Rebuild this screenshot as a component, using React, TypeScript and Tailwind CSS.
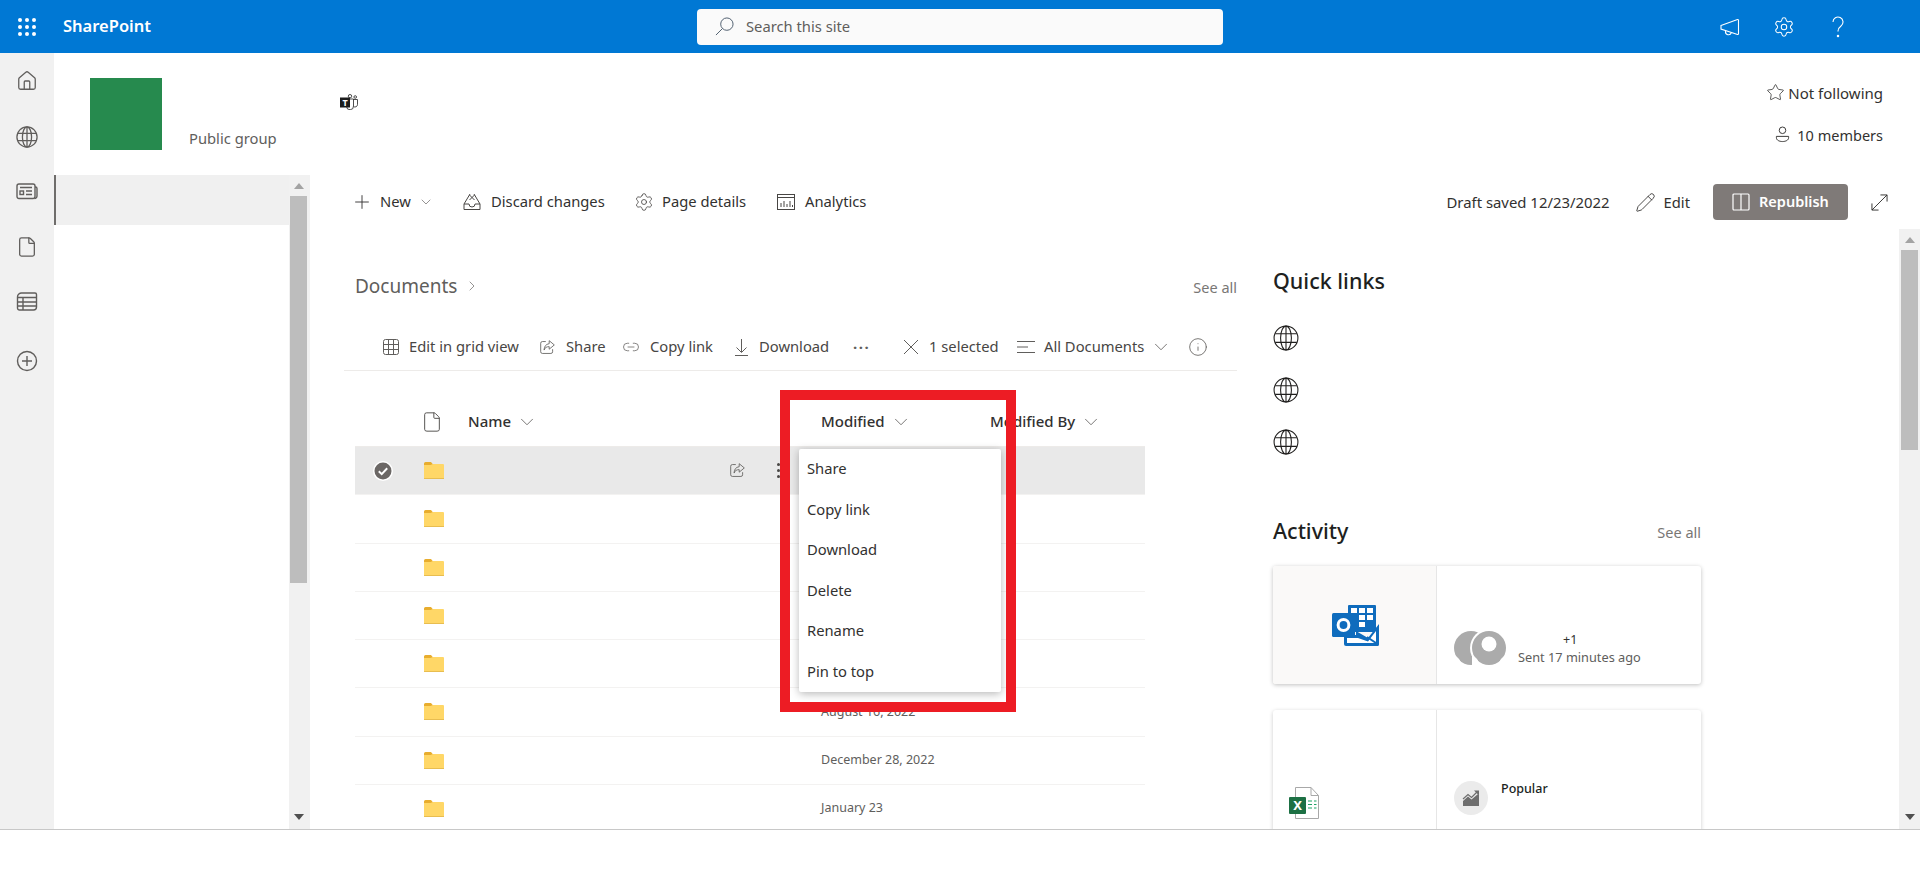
import {
  ChevronDown,
  ChevronRight,
  File,
  House,
  Info,
  Link2,
  Pencil,
  Plus,
  Settings,
  Star,
} from 'lucide-react';
import type { ReactNode } from 'react';

const GlobeIcon = ({ className, strokeWidth, color }: { className: string; strokeWidth: number; color: string }) => (
  <svg viewBox="0 0 24 24" fill="none" stroke={color} strokeWidth={strokeWidth} className={className}>
    <circle cx="12" cy="12" r="11" />
    <ellipse cx="12" cy="12" rx="5" ry="11" />
    <path d="M12 1v22M2 8h20M2 16h20" />
  </svg>
);

const ShareIcon = ({ className = '' }: { className?: string }) => (
  <svg viewBox="0 0 20 20" fill="none" stroke="currentColor" strokeWidth="1" className={className}>
    <path d="M8 3H4a2 2 0 0 0-2 2v10a2 2 0 0 0 2 2h10a2 2 0 0 0 2-2v-3" />
    <path d="M12 2l6 5-6 5V9c-3 0-5 1-6 4 0-4 2-7 6-7.500z" />
  </svg>
);

const FolderIcon = () => (
  <svg viewBox="0 0 20 17" className="h-[17px] w-[20px]">
    <path d="M0 1.500A1.500 1.500 0 0 1 1.500 0H7l2.500 3H0z" fill="#e8ad2e" />
    <path d="M0 3h6.500L9 2h10a1 1 0 0 1 1 1v13a1 1 0 0 1-1 1H1a1 1 0 0 1-1-1z" fill="#ffd767" />
    <path d="M0 16h20v.500a.500.500 0 0 1-.500.500H.500a.500.500 0 0 1-.500-.500z" fill="#e8bd50" />
  </svg>
);

const CheckCircle = () => (
  <svg viewBox="0 0 20 20" className="h-[20px] w-[20px]">
    <circle cx="10" cy="10" r="10" fill="#fff" />
    <circle cx="10" cy="10" r="8.500" fill="#6b6765" />
    <path d="M5.800 10.300l2.900 2.800 5.500-5.800" fill="none" stroke="#fff" strokeWidth="2" />
  </svg>
);

const NewsIcon = () => (
  <svg viewBox="0 0 22 22" fill="none" stroke="#605e5c" strokeWidth="1.400" className="h-[22px] w-[22px]">
    <rect x="1" y="4" width="18" height="14.500" rx="2" />
    <path d="M19 7h.500A1.500 1.500 0 0 1 21 8.500V16a2.500 2.500 0 0 1-2.500 2.500" />
    <path d="M4 7.500h12M10 11h6M10 14.500h6" />
    <rect x="4" y="11" width="3.500" height="3.500" />
  </svg>
);

const ListsIcon = () => (
  <svg viewBox="0 0 22 22" fill="none" stroke="#605e5c" strokeWidth="1.400" className="h-[22px] w-[22px]">
    <path d="M6 2h13a1.500 1.500 0 0 1 1.500 1.500V16a3 3 0 0 1-3 3H3.500A2 2 0 0 1 1.500 17V6A4 4 0 0 1 6 2z" />
    <path d="M1.500 6.500h19M1.500 11h19M1.500 15h19M7 6.500V19" />
  </svg>
);

const AddCircle = () => (
  <svg viewBox="0 0 22 22" fill="none" stroke="#605e5c" strokeWidth="1.400" className="h-[22px] w-[22px]">
    <circle cx="11" cy="11" r="9.500" />
    <path d="M11 6v10M6 11h10" />
  </svg>
);

const TeamsIcon = () => (
  <svg viewBox="0 0 18 16" className="h-[16px] w-[18px]">
    <circle cx="10" cy="2.200" r="1.700" fill="#fff" stroke="#222" strokeWidth=".8" />
    <circle cx="15.200" cy="3" r="1.300" fill="#fff" stroke="#222" strokeWidth=".8" />
    <path d="M12.500 5.500h5v5a2.500 2.500 0 0 1-4 2" fill="#fff" stroke="#222" strokeWidth=".8" />
    <path d="M6 5h7.500v7a3.500 3.500 0 0 1-7 .5" fill="#fff" stroke="#222" strokeWidth=".8" />
    <rect x="0" y="3.500" width="10" height="10" fill="#1c1c1c" />
    <text x="5" y="11.500" textAnchor="middle" fontSize="9" fontWeight="700" fill="#fff">
      T
    </text>
  </svg>
);

const OutlookIcon = () => (
  <svg viewBox="0 0 47 41" className="h-[41px] w-[47px]">
    <rect x="16" y="0" width="28" height="27" rx="1" fill="#0f6cbd" />
    <path d="M19 3h6v5h-6zM27 3h6v5h-6zM35 3h6v5h-6zM27 10h6v5h-6zM35 10h6v5h-6zM27 17h6v5h-6z" fill="#fff" />
    <path d="M12 30h12v-4l12 7 11-14v20.500a1.500 1.500 0 0 1-1.500 1.500H14a2 2 0 0 1-2-2z" fill="#0f6cbd" />
    <path d="M15 33h11l10 3.500 8-10.500V38H15z" fill="#fff" />
    <path d="M44 38l-9-6" stroke="#0f6cbd" strokeWidth="2" />
    <rect x="0" y="8" width="23" height="24" rx="1.500" fill="#0f6cbd" />
    <circle cx="11.500" cy="20" r="5.400" fill="none" stroke="#fff" strokeWidth="3" />
  </svg>
);

const AvatarPair = () => (
  <svg viewBox="0 0 52 34" className="h-[34px] w-[52px]">
    <circle cx="17" cy="17" r="17" fill="#ababab" />
    <path d="M0 24Q5 26 8 34H0z" fill="#fff" />
    <circle cx="35" cy="17" r="19" fill="#fff" />
    <circle cx="35" cy="17" r="17" fill="#ababab" />
    <circle cx="35" cy="13" r="7.500" fill="#fff" />
    <path d="M18 24Q23 26 26 34H18zM52 24Q47 26 44 34H52z" fill="#fff" />
  </svg>
);

const ExcelIcon = () => (
  <svg viewBox="0 0 30 32" className="h-[32px] w-[30px]">
    <path d="M6.500 .500H22l7.500 8v23h-23z" fill="#fff" stroke="#a8a8a8" strokeWidth="1" />
    <path d="M22 .500v8h7.500" fill="none" stroke="#a8a8a8" strokeWidth="1" />
    <path d="M19 14h4M25 14h2.500M19 17.500h4M25 17.500h2.500M19 21h4M25 21h2.500" stroke="#21a366" strokeWidth="1.200" />
    <rect x="0" y="10" width="17" height="17" rx="1" fill="#1d7044" />
    <text x="8.500" y="23" textAnchor="middle" fontSize="13" fontWeight="700" fill="#fff">
      X
    </text>
  </svg>
);

const TrendIcon = () => (
  <svg viewBox="0 0 18 18" className="h-[18px] w-[18px]">
    <path d="M1 17v-5l5-4.500 3.500 3L16 5l1 1v11z" fill="#6e6e6e" />
    <path d="M1 10l5-4.500 3.500 3L15 3" fill="none" stroke="#6e6e6e" strokeWidth="1.200" />
    <path d="M12 1.500h5v5z" fill="#6e6e6e" />
  </svg>
);

const ScrollTrack = ({ thumb, align }: { thumb: string; align: string }) => (
  <div className={`flex h-full w-[21px] shrink-0 flex-col bg-[#f1f1f1] ${align}`}>
    <div className="flex h-[21px] w-[17px] items-center justify-center">
      <div className="h-0 w-0 border-x-[5px] border-b-[6px] border-x-transparent border-b-[#a3a3a3]" />
    </div>
    <div className={`${thumb} w-[17px] bg-[#bdbdbd]`} />
    <div className="flex-1" />
    <div className="flex h-[24px] w-[17px] items-start justify-center pt-[9px]">
      <div className="h-0 w-0 border-x-[5px] border-t-[6px] border-x-transparent border-t-[#505050]" />
    </div>
  </div>
);

const CmdButton = ({
  icon,
  label,
  width,
  extra,
}: {
  icon: ReactNode;
  label: string;
  width: string;
  extra?: ReactNode;
}) => (
  <div className={`flex items-center ${width}`}>
    {icon}
    <span className="mb-[2px] ml-[10px] whitespace-nowrap text-[14.750px] text-[#323130]">{label}</span>
    {extra}
  </div>
);

const ToolButton = ({ icon, label, width }: { icon: ReactNode; label: string; width: string }) => (
  <div className={`flex items-center ${width}`}>
    {icon}
    <span className="mb-[2px] ml-[10px] whitespace-nowrap text-[14.750px] text-[#484644]">{label}</span>
  </div>
);

const HeaderCell = ({ label }: { label: string }) => (
  <div className="flex items-center">
    <span className="whitespace-nowrap text-[15px] font-medium text-[#323130]">{label}</span>
    <ChevronDown size={22} strokeWidth={0.8} className="ml-[5px] shrink-0 text-[#484644]" />
  </div>
);

const rows = [
  { selected: true, date: '' },
  { date: '' },
  { date: '' },
  { date: '' },
  { date: '' },
  { date: 'August 16, 2022' },
  { date: 'December 28, 2022' },
  { date: 'January 23' },
];

const menuItems = ['Share', 'Copy link', 'Download', 'Delete', 'Rename', 'Pin to top'];

const railIcons = [
  { icon: <House size={22} strokeWidth={1.400} color="#605e5c" />, gap: '' },
  { icon: <GlobeIcon className="h-[22px] w-[22px]" strokeWidth={1.400} color="#605e5c" />, gap: 'mt-[34px]' },
  { icon: <NewsIcon />, gap: 'mt-[32px]' },
  { icon: <File size={22} strokeWidth={1.400} color="#605e5c" />, gap: 'mt-[34px]' },
  { icon: <ListsIcon />, gap: 'mt-[33px]' },
  { icon: <AddCircle />, gap: 'mt-[37px]' },
];

const Waffle = () => (
  <svg viewBox="0 0 18 18" fill="#fff" className="h-[18px] w-[18px]">
    {[2, 9, 16].map(y =>
      [2, 9, 16].map(x => <circle key={`${x}-${y}`} cx={x} cy={y} r="2" />),
    )}
  </svg>
);

export default function App() {
  return (
    <div className="relative flex h-[889px] w-[1920px] flex-col overflow-hidden bg-white font-['Noto_Sans',sans-serif]">
      <header className="flex h-[53px] shrink-0 items-center bg-[#0078d4]">
        <div className="ml-[18px]">
          <Waffle />
        </div>
        <span className="ml-[27px] w-[88px] whitespace-nowrap text-[16.500px] font-semibold text-white">SharePoint</span>
        <div className="ml-[546px] flex h-[36px] w-[526px] items-center rounded-[4px] bg-[#fafafa] pl-[18px]">
          <svg viewBox="0 0 20 20" fill="none" stroke="#4a5a6a" strokeWidth="1" className="h-[19px] w-[19px]">
            <circle cx="12.500" cy="7.500" r="6.500" />
            <path d="M7.800 12.200L1 19" />
          </svg>
          <span className="ml-[12px] text-[14.750px] text-[#605e5c]">Search this site</span>
        </div>
        <div className="ml-auto flex items-center gap-[32px] pr-[71px] text-white">
          <svg viewBox="0 0 22 22" fill="none" stroke="#fff" strokeWidth="1.100" className="h-[22px] w-[22px]">
            <path d="M2 9.500L18.500 3.500a.8.8 0 0 1 1 .8v13.400a.8.8 0 0 1-1 .8L2 13z" />
            <path d="M6.500 14.500v1a3 3 0 0 0 5.800 1.300" />
          </svg>
          <Settings size={22} strokeWidth={1.100} />
          <svg viewBox="0 0 22 22" fill="none" stroke="#fff" strokeWidth="1.100" className="h-[22px] w-[22px]">
            <path d="M6 6a5 5 0 1 1 8 4c-2 1.500-3 2.500-3 5v.500" />
            <circle cx="11" cy="20" r=".7" fill="#fff" />
          </svg>
        </div>
      </header>

      <div className="flex h-[777px] shrink-0 overflow-hidden border-b border-[#c8c8c8]">
        <nav className="flex w-[54px] shrink-0 flex-col items-center bg-[#f1f1f1] pt-[17px]">
          {railIcons.map((item, i) => (
            <div key={i} className={item.gap}>
              {item.icon}
            </div>
          ))}
        </nav>

        <div className="flex min-w-0 flex-1 flex-col">
          <section className="flex h-[122px] shrink-0 items-start">
            <div className="ml-[36px] mt-[25px] h-[72px] w-[72px] bg-[#268a4e]" />
            <div className="ml-[27px] mt-[74px] w-[151px] whitespace-nowrap text-[14.750px] leading-[22px] text-[#605e5c]">
              Public group
            </div>
            <div className="mt-[41px]">
              <TeamsIcon />
            </div>
            <div className="ml-auto flex flex-col items-end pr-[37px] pt-[29px] text-[#323130]">
              <div className="flex h-[24px] items-center">
                <Star size={19} strokeWidth={1} className="-translate-y-[2px]" />
                <span className="mb-[2px] ml-[3px] text-[15px]">Not following</span>
              </div>
              <div className="mt-[18px] flex h-[24px] items-center">
                <svg viewBox="0 0 16 18" fill="none" stroke="#323130" strokeWidth="1" className="h-[17px] w-[15px] -translate-y-[2px]">
                  <circle cx="8" cy="4.500" r="3.500" />
                  <path d="M1.500 11h13v1.500c0 2.500-3 4-6.500 4s-6.500-1.500-6.500-4z" />
                </svg>
                <span className="ml-[7px] text-[14.500px]">10 members</span>
              </div>
            </div>
          </section>

          <div className="flex min-h-0 flex-1">
            <aside className="flex h-full w-[256px] shrink-0">
              <div className="flex-1">
                <div className="h-[50px] border-l-2 border-[#6f6d6b] bg-[#f0f0f0]" />
              </div>
              <ScrollTrack thumb="h-[387px]" align="items-start pl-[1px]" />
            </aside>

            <main className="flex min-w-0 flex-1 flex-col">
              <div className="flex h-[54px] shrink-0 items-center pl-[44px] pr-[32px]">
                <CmdButton
                  width="w-[109px]"
                  label="New"
                  icon={<Plus size={22} strokeWidth={1} color="#323130" className="-mx-[3px] shrink-0" />}
                  extra={<ChevronDown size={16} strokeWidth={1} color="#605e5c" className="ml-[7px] shrink-0" />}
                />
                <CmdButton
                  width="w-[172px]"
                  label="Discard changes"
                  icon={
                    <svg viewBox="0 0 18 18" fill="none" stroke="#484644" strokeWidth="1" className="h-[18px] w-[18px] shrink-0">
                      <path d="M1 11L7 1M17 11L11 1M1 11v5.500h16V11h-5a3 3 0 0 1-6 0z" />
                      <path d="M6.500 2l5 5M11.500 2l-5 5" />
                    </svg>
                  }
                />
                <CmdButton
                  width="w-[142px]"
                  label="Page details"
                  icon={<Settings size={20} strokeWidth={1} color="#484644" className="-mx-[1.500px] shrink-0" />}
                />
                <CmdButton
                  width="w-[100px]"
                  label="Analytics"
                  icon={
                    <svg viewBox="0 0 18 16" fill="none" stroke="#484644" strokeWidth="1" className="h-[16px] w-[18px] shrink-0">
                      <rect x=".5" y=".5" width="17" height="15" />
                      <path d="M.5 3.500h17M4 13V9M7 13V7M10 13v-3M13 13V7M15.500 13v-2" />
                    </svg>
                  }
                />
                <div className="ml-auto flex items-center">
                  <span className="whitespace-nowrap text-[14.900px] text-[#323130]">Draft saved 12/23/2022</span>
                  <Pencil size={21} strokeWidth={1} color="#323130" className="ml-[25px] shrink-0" />
                  <span className="ml-[8px] text-[14.750px] text-[#323130]">Edit</span>
                  <div className="ml-[23px] flex h-[36px] w-[135px] items-center rounded-[4px] bg-[#7f7a78] pl-[19px]">
                    <svg viewBox="0 0 18 18" fill="none" stroke="#fff" strokeWidth="1.200" className="h-[18px] w-[18px]">
                      <rect x="1" y="1" width="16" height="16" rx="1" />
                      <path d="M9 1v16" />
                    </svg>
                    <span className="ml-[9px] text-[14.500px] font-semibold text-white">Republish</span>
                  </div>
                  <svg viewBox="0 0 18 18" fill="none" stroke="#323130" strokeWidth="1" className="ml-[23px] h-[17px] w-[17px] shrink-0">
                    <path d="M1 17L17 1M10 1h7v7M1 10v7h7" />
                  </svg>
                </div>
              </div>

              <div className="flex min-h-0 flex-1">
                <div className="flex min-w-0 flex-1 overflow-hidden">
                  <div className="ml-[34px] w-[893px] shrink-0">
                    <div className="mt-[43px] flex h-[28px] items-center pl-[11px]">
                      <span className="text-[19px] text-[#605e5c]">Documents</span>
                      <ChevronRight size={16} strokeWidth={1} color="#605e5c" className="ml-[7px]" />
                      <span className="ml-auto pt-[3px] text-[14.500px] text-[#797775]">See all</span>
                    </div>

                    <div className="mt-[24px] flex h-[47px] items-center border-b border-[#edebe9] pl-[39px]">
                      <ToolButton
                        width="w-[156px]"
                        label="Edit in grid view"
                        icon={
                          <svg viewBox="0 0 16 16" fill="none" stroke="#605e5c" strokeWidth="1" className="h-[16px] w-[16px] shrink-0">
                            <rect x=".5" y=".5" width="15" height="15" rx="2" />
                            <path d="M.5 5.500h15M.5 10.500h15M5.500 .5v15M10.500 .5v15" />
                          </svg>
                        }
                      />
                      <ToolButton width="w-[83px]" label="Share" icon={<ShareIcon className="h-[17px] w-[17px] shrink-0 text-[#605e5c]" />} />
                      <ToolButton width="w-[112px]" label="Copy link" icon={<Link2 size={18} strokeWidth={1} color="#605e5c" className="shrink-0" />} />
                      <ToolButton
                        width="w-[119px]"
                        label="Download"
                        icon={
                          <svg viewBox="0 0 15 18" fill="none" stroke="#605e5c" strokeWidth="1" className="h-[18px] w-[15px] shrink-0">
                            <path d="M7.500 1v13M2.500 9.500l5 5 5-5M1 17.500h13" />
                          </svg>
                        }
                      />
                      <span className="w-[50px] text-[15px] font-bold leading-none tracking-[1.500px] text-[#605e5c]">···</span>
                      <svg viewBox="0 0 16 16" fill="none" stroke="#605e5c" strokeWidth="1" className="h-[16px] w-[16px] shrink-0">
                        <path d="M1 1l14 14M15 1L1 15" />
                      </svg>
                      <span className="mb-[2px] ml-[10px] w-[88px] whitespace-nowrap text-[14.750px] text-[#484644]">1 selected</span>
                      <svg viewBox="0 0 18 14" fill="none" stroke="#605e5c" strokeWidth="1" className="h-[14px] w-[18px] shrink-0">
                        <path d="M0 1.500h18M0 7h11M0 12.500h18" />
                      </svg>
                      <span className="mb-[2px] ml-[9px] whitespace-nowrap text-[14.750px] text-[#484644]">All Documents</span>
                      <ChevronDown size={22} strokeWidth={0.8} color="#484644" className="ml-[6px] shrink-0" />
                      <Info size={20} strokeWidth={1} color="#605e5c" className="ml-[16px] shrink-0" />
                    </div>

                    <div className="ml-[11px] w-[790px]">
                      <div className="grid h-[76px] grid-cols-[69px_397px_169px_1fr] items-center border-b border-[#edebe9] pt-[26px]">
                        <div />
                        <div className="flex items-center">
                          <File size={22} strokeWidth={1} color="#484644" className="-ml-[3px] shrink-0" />
                          <div className="ml-[25px]">
                            <HeaderCell label="Name" />
                          </div>
                        </div>
                        <HeaderCell label="Modified" />
                        <HeaderCell label="Modified By" />
                      </div>
                      {rows.map((row, i) => (
                        <div
                          key={i}
                          className={`grid h-[48.250px] grid-cols-[69px_397px_1fr] items-center border-b border-[#f3f2f1] ${
                            row.selected ? 'bg-[#e9e9e9]' : ''
                          }`}
                        >
                          <div className="pl-[18px]">{row.selected && <CheckCircle />}</div>
                          <div className="flex items-center">
                            <FolderIcon />
                            {row.selected && (
                              <>
                                <ShareIcon className="ml-[285px] h-[17px] w-[17px] text-[#605e5c]" />
                                <div className="ml-[31px] flex flex-col gap-[3px]">
                                  <div className="h-[3px] w-[3px] rounded-full bg-[#484644]" />
                                  <div className="h-[3px] w-[3px] rounded-full bg-[#484644]" />
                                  <div className="h-[3px] w-[3px] rounded-full bg-[#484644]" />
                                </div>
                              </>
                            )}
                          </div>
                          <span className="whitespace-nowrap text-[12.500px] text-[#605e5c]">{row.date}</span>
                        </div>
                      ))}
                    </div>
                  </div>

                  <div className="ml-[36px] w-[428px] shrink-0">
                    <div className="mt-[38px] flex h-[28px] items-center text-[21.500px] font-medium text-[#201f1e]">Quick links</div>
                    <div className="mt-[30px] flex flex-col gap-[26px]">
                      <GlobeIcon className="h-[26px] w-[26px]" strokeWidth={1} color="#201f1e" />
                      <GlobeIcon className="h-[26px] w-[26px]" strokeWidth={1} color="#201f1e" />
                      <GlobeIcon className="h-[26px] w-[26px]" strokeWidth={1} color="#201f1e" />
                    </div>
                    <div className="mt-[62px] flex h-[28px] items-center">
                      <span className="text-[21.500px] font-medium text-[#201f1e]">Activity</span>
                      <span className="ml-auto pt-[4px] text-[14.500px] text-[#797775]">See all</span>
                    </div>
                    <div className="mt-[21px] flex h-[118px] overflow-hidden rounded-[3px] bg-white shadow-[0_1px_4px_rgba(0,0,0,0.25)]">
                      <div className="flex w-[164px] shrink-0 items-center justify-center border-r border-[#e6e6e6] bg-[#faf9f8] pl-[1px] pt-[1px]">
                        <OutlookIcon />
                      </div>
                      <div className="flex items-start pl-[17px] pt-[65px]">
                        <AvatarPair />
                        <div className="ml-[12px] mt-[1px] flex flex-col">
                          <span className="pl-[45px] text-[12.500px] leading-[16px] text-[#323130]">+1</span>
                          <span className="mt-[1px] whitespace-nowrap text-[12.750px] leading-[16px] text-[#605e5c]">Sent 17 minutes ago</span>
                        </div>
                      </div>
                    </div>
                    <div className="mt-[26px] flex h-[140px] rounded-[3px] bg-white shadow-[0_1px_4px_rgba(0,0,0,0.2)]">
                      <div className="w-[164px] shrink-0 border-r border-[#e6e6e6] pl-[16px] pt-[77px]">
                        <ExcelIcon />
                      </div>
                      <div className="flex items-start pl-[17px] pt-[71px]">
                        <div className="flex h-[34px] w-[34px] items-center justify-center rounded-full bg-[#ebebeb]">
                          <TrendIcon />
                        </div>
                        <span className="ml-[13px] text-[12.500px] font-medium leading-[16px] text-[#201f1e]">Popular</span>
                      </div>
                    </div>
                  </div>
                </div>
                <ScrollTrack thumb="h-[200px]" align="items-center" />
              </div>
            </main>
          </div>
        </div>
      </div>

      {/* context menu and the red annotation drawn over the list */}
      <div className="absolute left-[799px] top-[449px] flex h-[243px] w-[202px] flex-col justify-center rounded-[2px] bg-white pl-[8px] shadow-[0_2px_8px_rgba(0,0,0,0.28)]">
        {menuItems.map(item => (
          <div key={item} className="flex h-[40.500px] items-center pb-[2px] text-[14.750px] text-[#323130]">
            {item}
          </div>
        ))}
      </div>
      <div className="absolute left-[780px] top-[390px] h-[322px] w-[236px] border-[10px] border-[#ed1c24]" />
    </div>
  );
}
